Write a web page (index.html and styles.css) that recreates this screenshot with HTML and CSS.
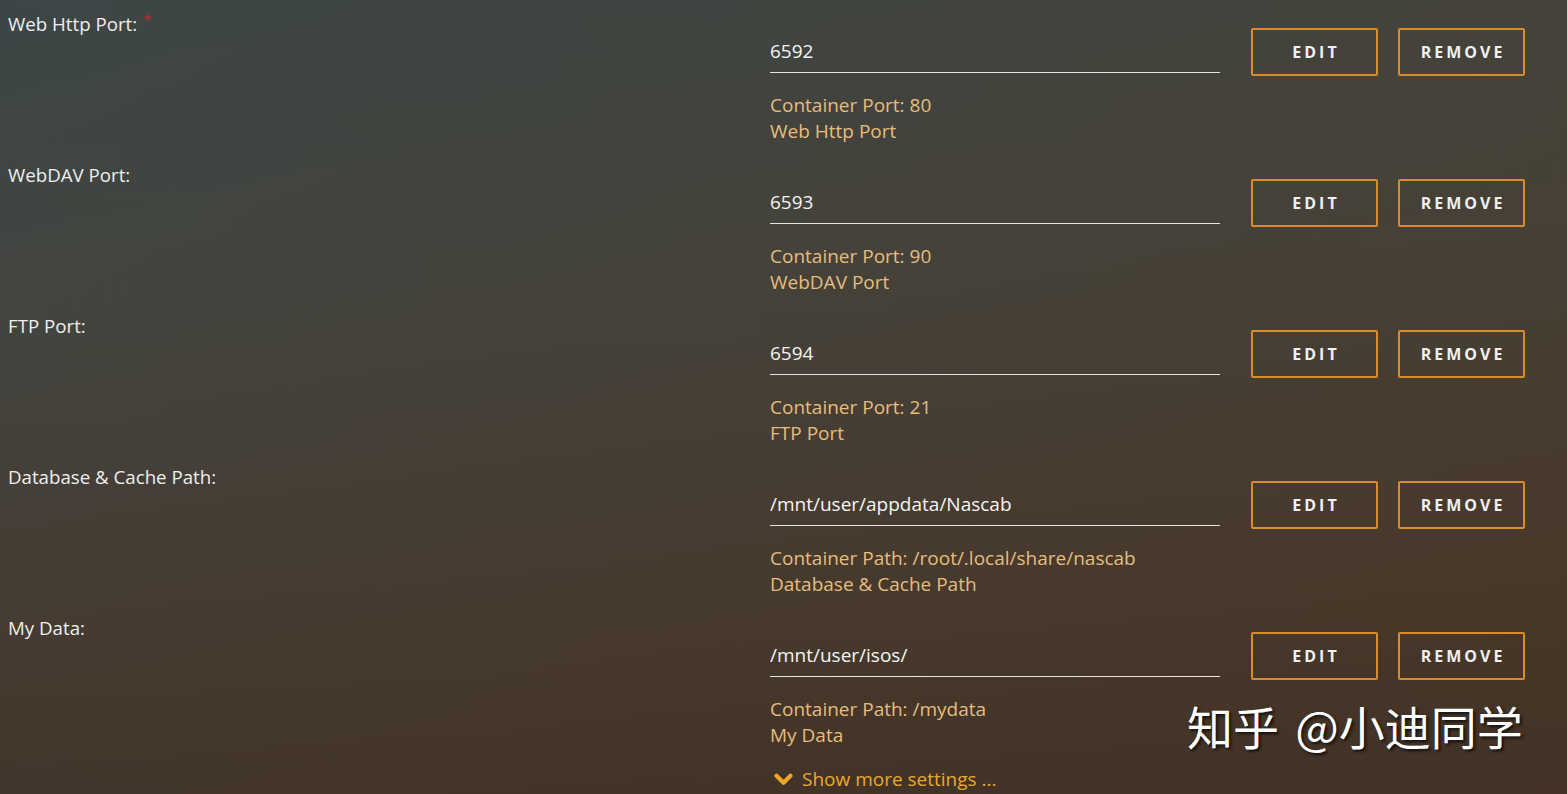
FILE: index.html
```html
<!DOCTYPE html>
<html>
<head>
<meta charset="utf-8">
<link rel="stylesheet" href="styles.css">
</head>
<body>
<div class="page">
  <div class="row">
    <div class="label">Web Http Port:<span class="req">*</span></div>
    <div class="field">
      <div class="input">6592</div>
      <div class="hint">Container Port: 80</div>
      <div class="hint">Web Http Port</div>
    </div>
    <div class="actions"><button class="btn">EDIT</button><button class="btn">REMOVE</button></div>
  </div>
  <div class="row">
    <div class="label">WebDAV Port:</div>
    <div class="field">
      <div class="input">6593</div>
      <div class="hint">Container Port: 90</div>
      <div class="hint">WebDAV Port</div>
    </div>
    <div class="actions"><button class="btn">EDIT</button><button class="btn">REMOVE</button></div>
  </div>
  <div class="row">
    <div class="label">FTP Port:</div>
    <div class="field">
      <div class="input">6594</div>
      <div class="hint">Container Port: 21</div>
      <div class="hint">FTP Port</div>
    </div>
    <div class="actions"><button class="btn">EDIT</button><button class="btn">REMOVE</button></div>
  </div>
  <div class="row">
    <div class="label">Database &amp; Cache Path:</div>
    <div class="field">
      <div class="input">/mnt/user/appdata/Nascab</div>
      <div class="hint">Container Path: /root/.local/share/nascab</div>
      <div class="hint">Database &amp; Cache Path</div>
    </div>
    <div class="actions"><button class="btn">EDIT</button><button class="btn">REMOVE</button></div>
  </div>
  <div class="row last">
    <div class="label">My Data:</div>
    <div class="field">
      <div class="input">/mnt/user/isos/</div>
      <div class="hint">Container Path: /mydata</div>
      <div class="hint">My Data</div>
      <div class="more">
        <svg class="chev" viewBox="0 0 20 14" width="19" height="13"><path d="M2.5 3 L10 10.5 L17.5 3" fill="none" stroke="currentColor" stroke-width="4.5" stroke-linecap="round" stroke-linejoin="round"/></svg>
        <span>Show more settings ...</span>
      </div>
    </div>
    <div class="actions"><button class="btn">EDIT</button><button class="btn">REMOVE</button></div>
  </div>
</div>
<div class="watermark">知乎 @小迪同学</div>
</body>
</html>
```
FILE: styles.css
```css
html, body {
  margin: 0;
  height: 100%;
}
body {
  width: 1567px;
  height: 794px;
  overflow: hidden;
  position: relative;
  font-family: "Open Sans", "Noto Sans", sans-serif;
  font-size: 19px;
  color: #f2f2f2;
  background:
    linear-gradient(90deg, rgba(0,0,0,0) 0%, rgba(80,55,30,0.25) 100%),
    linear-gradient(175deg, #3c4646 0%, #43443f 35%, #45392e 75%, #3e3027 100%);
}
.page {
  padding-left: 8px;
}
.row {
  display: grid;
  grid-template-columns: 762px 450px auto;
  height: 151px;
}
.label {
  padding-top: 11px;
  line-height: 26px;
  font-size: 18.7px;
  color: #eeeeee;
}
.req {
  color: #c0262b;
  font-size: 14px;
  vertical-align: top;
  margin-left: 6px;
  line-height: 18px;
}
.field {
  padding-top: 36px;
}
.input {
  height: 36px;
  line-height: 30px;
  border-bottom: 1px solid #e4e4e4;
  color: #f4f4f4;
  margin-bottom: 19px;
}
.hint {
  line-height: 26px;
  color: #e6bd7e;
}
.more {
  margin-top: 20px;
  display: flex;
  align-items: center;
  gap: 9px;
  color: #eaa92a;
  line-height: 22px;
  padding-left: 4px;
}
.chev {
  display: block;
  color: #eaa92a;
}
.actions {
  display: flex;
  gap: 20px;
  padding-top: 28px;
  padding-left: 31px;
  align-items: flex-start;
}
.btn {
  width: 127px;
  height: 48px;
  box-sizing: border-box;
  border: 2px solid #d98c2c;
  border-radius: 2px;
  background: transparent;
  color: #f0f0f0;
  font-family: "Open Sans", "Noto Sans", sans-serif;
  font-weight: 700;
  font-size: 16px;
  letter-spacing: 3px;
  padding: 0 0 0 3px;
  cursor: pointer;
}
.watermark {
  position: absolute;
  left: 1187px;
  top: 696px;
  font-family: "Noto Sans CJK SC", sans-serif;
  font-size: 46px;
  line-height: 58px;
  color: #ffffff;
  text-shadow: 2px 2px 3px rgba(0,0,0,0.7);
  word-spacing: 6px;
}
```
